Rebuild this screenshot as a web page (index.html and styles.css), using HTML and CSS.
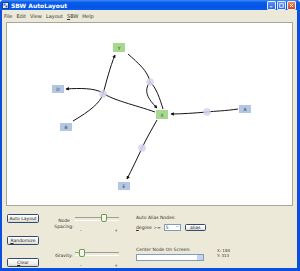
FILE: index.html
```html
<!DOCTYPE html>
<html lang="en">
  <head>
    <meta charset="UTF-8" />
    <title>SBW AutoLayout</title>
    <link rel="stylesheet" href="styles.css">
  </head>
  <body>
    <div class="window">
      <div class="titlebar">
        <svg class="app-icon" width="7" height="7" viewBox="0 0 7 7">
          <rect x="0.5" y="0.5" width="6" height="6" fill="#e8eef8" stroke="#1b3f9a" stroke-width="1" />
          <rect x="1.5" y="1.5" width="2" height="2" fill="#3a6fd0" />
          <rect x="3.5" y="3.5" width="2" height="2" fill="#3a6fd0" />
        </svg>
        <span class="title">SBW AutoLayout</span>
        <div class="win-buttons">
          <div class="win-btn">
            <svg width="8" height="8" viewBox="0 0 8 8"><rect x="2" y="5" width="3" height="1" fill="#fff" /></svg>
          </div>
          <div class="win-btn">
            <svg width="8" height="8" viewBox="0 0 8 8"><rect x="2" y="2" width="4" height="4" fill="none" stroke="#fff" stroke-width="1" /></svg>
          </div>
          <div class="win-btn close">
            <svg width="8" height="8" viewBox="0 0 8 8"><path d="M2.2 2.2 L5.8 5.8 M5.8 2.2 L2.2 5.8" stroke="#fff" stroke-width="1.1" /></svg>
          </div>
        </div>
      </div>

      <div class="client">
        <div class="menubar">
          <span>File</span>
          <span>Edit</span>
          <span>View</span>
          <span>Layout</span>
          <span><u>S</u>BW</span>
          <span>Help</span>
        </div>

        <div class="canvas">
          <!-- graph drawn in page coordinates -->
          <svg class="graph" viewBox="7 24 285 182" preserveAspectRatio="none">
            <defs>
              <marker id="arrow" viewBox="0 0 6 6" refX="5" refY="3" markerWidth="3.5" markerHeight="3.5" orient="auto">
                <path d="M0 0 L6 3 L0 6 z" fill="#111" />
              </marker>
            </defs>

            <g class="edges">
              <path d="M73 122 C90 112, 100 104, 103 95 C106 84, 110 68, 115 56" marker-end="url(#arrow)" />
              <path d="M155 113 C135 106, 112 101, 103 94 C95 89, 80 89, 66 90" marker-end="url(#arrow)" />
              <path d="M128 55 C138 64, 148 72, 150 83 C143 92, 148 100, 157 109" marker-end="url(#arrow)" />
              <path d="M163 110 C160 100, 156 88, 150 83" />
              <path d="M238 110 C225 112, 215 112, 207 113 C195 114, 182 115, 171 115" marker-end="url(#arrow)" />
              <path d="M157 121 C152 130, 146 140, 142 149 C137 160, 132 170, 127 180" marker-end="url(#arrow)" />
            </g>

            <g class="aliases">
              <circle cx="103" cy="95" r="3.5" />
              <circle cx="150" cy="83" r="3.5" />
              <circle cx="207" cy="113" r="3.5" />
              <circle cx="142" cy="149" r="3.5" />
            </g>

            <g class="nodes">
              <rect class="green" x="113" y="44" width="12" height="9" />
              <text x="119" y="50.5">Y</text>
              <rect class="green" x="156" y="111" width="12" height="9" />
              <text x="162" y="117.5">X</text>
              <rect class="blue" x="52" y="86" width="12" height="8" />
              <text x="58" y="92">D</text>
              <rect class="blue" x="60" y="124" width="12" height="8" />
              <text x="66" y="130">B</text>
              <rect class="blue" x="239" y="106" width="12" height="8" />
              <text x="245" y="112">A</text>
              <rect class="blue" x="118" y="183" width="12" height="8" />
              <text x="124" y="189">E</text>
            </g>
          </svg>
        </div>

        <div class="controls">
          <div class="buttons">
            <button class="xp-btn">Auto Layout</button>
            <button class="xp-btn"><u>R</u>andomize</button>
            <button class="xp-btn"><u>C</u>lear</button>
          </div>

          <div class="sliders">
            <div class="slider-row">
              <div class="slider-label">Node<br>Spacing:</div>
              <div class="slider">
                <div class="track"><div class="thumb" style="left: 60%"></div></div>
                <div class="ends"><span>-</span><span>+</span></div>
              </div>
            </div>
            <div class="slider-row">
              <div class="slider-label">Gravity:</div>
              <div class="slider">
                <div class="track"><div class="thumb" style="left: 8%"></div></div>
                <div class="ends"><span>-</span><span>+</span></div>
              </div>
            </div>
          </div>

          <div class="options">
            <div class="opt-label">Auto Alias Nodes:</div>
            <div class="alias-row">
              <span><u>d</u>egree &gt;=</span>
              <div class="spinner">
                <span class="spin-value">5</span>
                <div class="spin-arrows"><span></span><span></span></div>
              </div>
              <button class="xp-btn small">alias</button>
            </div>
            <div class="center-row">
              <div>
                <div class="opt-label">Center Node On Screen:</div>
                <div class="combo"><div class="combo-arrow"></div></div>
              </div>
              <div class="coords">X: 184<br>Y: 313</div>
            </div>
          </div>
        </div>
      </div>
    </div>
  </body>
</html>
```

FILE: styles.css
```css
/* page */
body {
  margin: 0;
  background-color: #ffffff;
  font-family: Tahoma, "DejaVu Sans", sans-serif;
}

.window {
  width: 300px;
  height: 271px;
  background-color: #0a4fe0;
  border-radius: 4px 4px 0 0;
  display: flex;
  flex-direction: column;
  box-sizing: border-box;
  padding: 0 3px 3px 2px;
}

/* title bar */
.titlebar {
  height: 11px;
  margin: 0 -3px 0 -2px;
  padding: 0 4px 0 2px;
  display: flex;
  align-items: center;
  border-radius: 4px 4px 0 0;
  background: linear-gradient(#3c8cf8, #0a5ce8 25%, #0453e4 70%, #0a5ff0);
}

.app-icon {
  margin-right: 2px;
}

.title {
  color: #ffffff;
  font-size: 6px;
  font-weight: bold;
  flex: 1;
}

.win-buttons {
  display: flex;
  gap: 1px;
}

.win-btn {
  width: 7px;
  height: 7px;
  border: 0.5px solid #e8f0ff;
  border-radius: 1px;
  background: linear-gradient(#5a92ff, #2a63e8);
  display: flex;
  align-items: center;
  justify-content: center;
}

.win-btn svg {
  width: 7px;
  height: 7px;
}

.win-btn.close {
  background: linear-gradient(#f08a62, #d2421c);
}

/* client area */
.client {
  flex: 1;
  background-color: #ece9d8;
  display: flex;
  flex-direction: column;
}

.menubar {
  height: 11px;
  display: flex;
  align-items: center;
  gap: 4px;
  padding-left: 2px;
  font-size: 5px;
  color: #333333;
}

.canvas {
  height: 184px;
  margin: 1px 4px 0 4px;
  background-color: #ffffff;
  border: 1px solid #a8a69c;
  box-sizing: border-box;
}

.graph {
  display: block;
  width: 100%;
  height: 100%;
}

.edges path {
  fill: none;
  stroke: #151515;
  stroke-width: 1;
}

.aliases circle {
  fill: #d6d6f0;
  stroke: #c6c6e6;
  stroke-width: 0.5;
  opacity: 0.85;
}

.nodes rect.green {
  fill: #a6d98b;
}

.nodes rect.blue {
  fill: #b3c7e3;
}

.nodes text {
  font-family: "DejaVu Sans", sans-serif;
  font-size: 4.5px;
  fill: #2a3a4a;
  text-anchor: middle;
}

/* bottom controls */
.controls {
  flex: 1;
  display: flex;
  padding: 8px 0 0 5px;
  font-size: 4.5px;
  color: #333333;
}

.buttons {
  width: 32px;
  display: flex;
  flex-direction: column;
  gap: 13px;
}

.xp-btn {
  height: 9px;
  padding: 0;
  border: 0.6px solid #304a78;
  border-radius: 1.5px;
  background: linear-gradient(#ffffff, #f0efe8 70%, #d8d3c6);
  font-family: Tahoma, "DejaVu Sans", sans-serif;
  font-size: 4.5px;
  color: #222222;
}

.sliders {
  width: 83px;
  padding-left: 14px;
  display: flex;
  flex-direction: column;
  gap: 16px;
}

.slider-row {
  display: flex;
  align-items: flex-start;
}

.slider-label {
  width: 22px;
  text-align: center;
  padding-top: 4px;
  line-height: 6px;
}

.slider {
  width: 44px;
}

.track {
  position: relative;
  height: 2px;
  margin-top: 3px;
  border-top: 0.6px solid #9d9d92;
  border-bottom: 0.6px solid #ffffff;
}

.thumb {
  position: absolute;
  top: -4px;
  width: 4px;
  height: 6px;
  border: 0.6px solid #6aa050;
  border-radius: 1px 1px 2px 2px;
  background-color: #f4f4ee;
}

.ends {
  display: flex;
  justify-content: space-between;
  padding: 7px 1px 0 5px;
}

.options {
  flex: 1;
  display: flex;
  flex-direction: column;
}

.opt-label {
  line-height: 6px;
  margin-top: 1px;
}

.alias-row {
  display: flex;
  align-items: center;
  gap: 3px;
  margin-top: 3px;
}

.spinner {
  width: 17px;
  height: 7px;
  background-color: #ffffff;
  border: 0.6px solid #7f9db9;
  display: flex;
  align-items: center;
  justify-content: space-between;
  box-sizing: border-box;
  padding-left: 1px;
}

.spin-arrows {
  width: 5px;
  height: 100%;
  display: flex;
  flex-direction: column;
}

.spin-arrows span {
  flex: 1;
  background-color: #c5d3f2;
  border: 0.3px solid #ffffff;
}

.xp-btn.small {
  width: 21px;
  height: 7px;
  margin-left: 1px;
}

.center-row {
  display: flex;
  align-items: flex-start;
  margin-top: 15px;
}

.combo {
  width: 68px;
  height: 7px;
  margin-top: 1px;
  background-color: #ffffff;
  border: 0.6px solid #7f9db9;
  box-sizing: border-box;
  display: flex;
  justify-content: flex-end;
}

.combo-arrow {
  width: 6px;
  background-color: #c5d3f2;
}

.coords {
  margin: 2px 0 0 13px;
  line-height: 5px;
  font-size: 4px;
}
```
